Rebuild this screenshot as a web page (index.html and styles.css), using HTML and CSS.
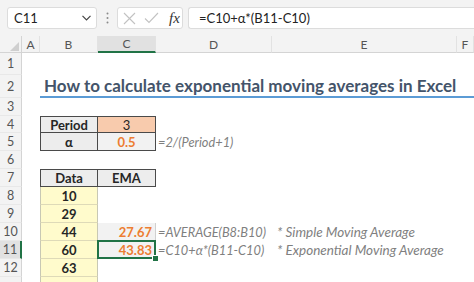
FILE: index.html
```html
<!DOCTYPE html>
<html lang="en">
<head>
  <meta charset="UTF-8">
  <title>Exponential moving average</title>
  <link rel="stylesheet" href="styles.css">
</head>
<body>
  <div class="toolbar">
    <div class="namebox">
      <span>C11</span>
      <svg class="chev" width="9" height="6" viewBox="0 0 9 6"><polyline points="0.5,0.8 4.5,4.8 8.5,0.8" fill="none" stroke="#444" stroke-width="1.2"/></svg>
    </div>
    <div class="dots">
      <svg width="3" height="12" viewBox="0 0 3 12"><circle cx="1.5" cy="1.5" r="1" fill="#8a8a8a"/><circle cx="1.5" cy="6" r="1" fill="#8a8a8a"/><circle cx="1.5" cy="10.5" r="1" fill="#8a8a8a"/></svg>
    </div>
    <div class="fxbox">
      <svg width="13" height="13" viewBox="0 0 13 13"><path d="M1 1 L12 12 M12 1 L1 12" stroke="#c2c2c2" stroke-width="1.1" fill="none"/></svg>
      <svg width="15" height="12" viewBox="0 0 15 12"><polyline points="1,6.5 5,10.5 14,1" stroke="#c2c2c2" stroke-width="1.1" fill="none"/></svg>
      <span class="fx">fx</span>
    </div>
    <div class="formula">=C10+α*(B11-C10)</div>
  </div>

  <div class="grid">
    <!-- column headers -->
    <div class="corner"><svg width="9" height="9" viewBox="0 0 9 9"><polygon points="9,0 9,9 0,9" fill="#cfcfcf"/></svg></div>
    <div class="ch">A</div><div class="ch">B</div><div class="ch sel">C</div><div class="ch">D</div><div class="ch">E</div><div class="ch">F</div>

    <div class="rh">1</div><div></div><div></div><div></div><div></div><div></div><div></div>

    <div class="rh">2</div><div></div>
    <div class="c title">How to calculate exponential moving averages in Excel</div>
    <div class="c uline"></div><div class="c uline"></div><div class="c uline"></div><div class="c uline"></div>

    <div class="rh">3</div><div></div><div></div><div></div><div></div><div></div><div></div>

    <div class="rh">4</div><div></div>
    <div class="c hd box bt bl">Period</div>
    <div class="c inp box bt">3</div>
    <div></div><div></div><div></div>

    <div class="rh">5</div><div></div>
    <div class="c hd box bl">α</div>
    <div class="c calc mid box">0.5</div>
    <div class="c note">=2/(Period+1)</div><div></div><div></div>

    <div class="rh">6</div><div></div><div></div><div></div><div></div><div></div><div></div>

    <div class="rh">7</div><div></div>
    <div class="c hd box bt bl">Data</div>
    <div class="c hd box bt">EMA</div>
    <div></div><div></div><div></div>

    <div class="rh">8</div><div></div><div class="c data">10</div><div></div><div></div><div></div><div></div>
    <div class="rh">9</div><div></div><div class="c data">29</div><div></div><div></div><div></div><div></div>

    <div class="rh">10</div><div></div><div class="c data">44</div>
    <div class="c calc out">27.67</div>
    <div class="c note">=AVERAGE(B8:B10)</div>
    <div class="c note remark">* Simple Moving Average</div><div></div>

    <div class="rh rsel">11</div><div></div><div class="c data">60</div>
    <div class="c calc out selected">43.83</div>
    <div class="c note">=C10+α*(B11-C10)</div>
    <div class="c note remark">* Exponential Moving Average</div><div></div>

    <div class="rh">12</div><div></div><div class="c data">63</div><div></div><div></div><div></div><div></div>
    <div class="rh"></div><div></div><div class="c data"></div><div></div><div></div><div></div><div></div>
  </div>
</body>
</html>
```

FILE: styles.css
```css
body {
  margin: 0;
  width: 474px;
  height: 282px;
  overflow: hidden;
  background: #fff;
  font-family: Lato, "Liberation Sans", sans-serif;
  color: #262626;
}

.toolbar {
  height: 36px;
  box-sizing: border-box;
  padding: 7px 0 0 7px;
  display: flex;
  align-items: flex-start;
  background: #f3f3f3;
}
.namebox {
  width: 90px;
  height: 22px;
  box-sizing: border-box;
  background: #fff;
  border: 1px solid #dcdcdc;
  border-radius: 3px;
  display: flex;
  align-items: center;
  justify-content: space-between;
  padding: 0 5px 0 6px;
  font-size: 13px;
  color: #222;
}
.dots {
  width: 20px;
  height: 22px;
  display: flex;
  align-items: center;
  justify-content: center;
}
.fxbox {
  width: 66px;
  height: 22px;
  box-sizing: border-box;
  background: #fff;
  border: 1px solid #dcdcdc;
  border-radius: 3px;
  display: flex;
  align-items: center;
  gap: 8px;
  padding-left: 5px;
}
.fx {
  font-family: "Liberation Serif", serif;
  font-style: italic;
  font-size: 15px;
  color: #333;
  margin-left: 2px;
}
.formula {
  flex: 1;
  margin-left: 5px;
  height: 22px;
  box-sizing: border-box;
  background: #fff;
  border: 1px solid #dcdcdc;
  border-right: none;
  border-radius: 3px 0 0 3px;
  display: flex;
  align-items: center;
  padding-left: 10px;
  font-size: 13px;
  color: #222;
}

.grid {
  display: grid;
  grid-template-columns: 22px 18px 58px 58px 116px 185px 1fr;
  grid-template-rows: 17px 22px 23px 18px 17px 18px 18px 18px 18px 18px 18px 18px 18px 18px;
}
.grid > div {
  box-sizing: border-box;
  min-width: 0;
}

.corner {
  background: #f3f3f3;
  border-right: 1px solid #d4d4d4;
  border-bottom: 1px solid #d4d4d4;
  display: flex;
  align-items: flex-end;
  justify-content: flex-end;
  padding: 0 2px 1px 0;
}
.ch {
  background: #f3f3f3;
  border-right: 1px solid #e2e2e2;
  border-bottom: 1px solid #d4d4d4;
  font-size: 12px;
  color: #555;
  display: flex;
  align-items: center;
  justify-content: center;
}
.ch.sel {
  background: #e1e1e1;
  border-bottom: 2px solid #217346;
}
.rh {
  background: #f3f3f3;
  border-right: 1px solid #d4d4d4;
  border-bottom: 1px solid #e8e8e8;
  font-size: 12.5px;
  color: #555;
  display: flex;
  align-items: center;
  justify-content: center;
}
.rh.rsel {
  background: #e1e1e1;
  border-right: 2px solid #217346;
}

.c {
  display: flex;
  align-items: center;
  padding: 0 3px;
  white-space: nowrap;
  font-size: 13px;
}
.title {
  padding-left: 4px;
  font-size: 17px;
  font-weight: bold;
  color: #44546a;
  border-bottom: 2px solid #5b9bd5;
  overflow: visible;
}
.uline {
  border-bottom: 2px solid #5b9bd5;
}

.box {
  border-right: 1px solid #4a4a4a;
  border-bottom: 1px solid #4a4a4a;
}
.bt { border-top: 1px solid #4a4a4a; }
.bl { border-left: 1px solid #4a4a4a; }

.hd {
  background: #ededed;
  font-weight: bold;
  justify-content: center;
}
.inp {
  background: #f8cbad;
  justify-content: center;
}
.calc {
  background: #f2f2f2;
  color: #ed7d31;
  font-weight: bold;
}
.mid { justify-content: center; }
.out {
  justify-content: flex-end;
  border: 1px solid #d0d0d0;
  border-left: none;
  border-top: none;
}
.selected {
  position: relative;
}
.selected::after {
  content: "";
  position: absolute;
  left: -1px;
  top: -1px;
  right: -1px;
  bottom: -1px;
  border: 2px solid #217346;
}
.selected::before {
  content: "";
  position: absolute;
  right: -4px;
  bottom: -4px;
  width: 5px;
  height: 5px;
  background: #217346;
  border: 1px solid #fff;
  z-index: 1;
}

.data {
  background: #fffbcc;
  border-left: 1px solid #c8c8b4;
  border-right: 1px solid #c8c8b4;
  border-bottom: 1px solid #dedab8;
  font-weight: bold;
  justify-content: center;
}
.note {
  font-style: italic;
  font-size: 12.8px;
  color: #7f7f7f;
  padding-left: 2px;
}
.note.remark {
  font-size: 13.5px;
  padding-left: 5px;
}
```
